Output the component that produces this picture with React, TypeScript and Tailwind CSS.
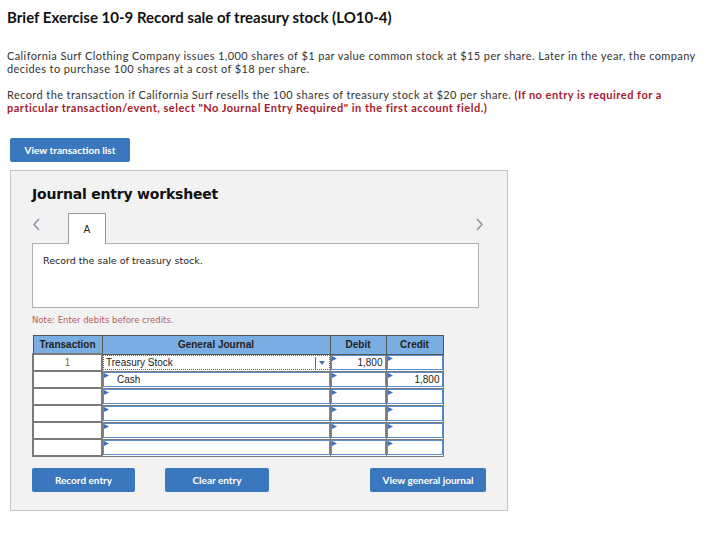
import React from "react";

const rows = [
  { tx: "1", account: "Treasury Stock", indent: false, debit: "1,800", credit: "", focused: true },
  { tx: "", account: "Cash", indent: true, debit: "", credit: "1,800", focused: false },
  { tx: "", account: "", indent: false, debit: "", credit: "", focused: false },
  { tx: "", account: "", indent: false, debit: "", credit: "", focused: false },
  { tx: "", account: "", indent: false, debit: "", credit: "", focused: false },
  { tx: "", account: "", indent: false, debit: "", credit: "", focused: false },
];

export default function App() {
  return (
    <div className="min-h-[540px] bg-white px-[7px] pt-[9px] text-[#222] font-['Lato','Liberation_Sans',sans-serif]">
      <h2 className="text-[15px] font-bold leading-[16px] text-[#111]">
        Brief Exercise 10-9 Record sale of treasury stock (LO10-4)
      </h2>

      <p className="mt-[24px] text-[11px] leading-[13px] tracking-[0.4px] text-[#333]">
        California Surf Clothing Company issues 1,000 shares of $1 par value common stock at $15 per share. Later in the year, the company decides to purchase 100 shares at a cost of $18 per share.
      </p>
      <p className="mt-[13px] text-[11px] leading-[13px] tracking-[0.4px] text-[#333]">
        Record the transaction if California Surf resells the 100 shares of treasury stock at $20 per share.{" "}
        <span className="font-bold tracking-[0.5px] text-[#a6192e]">
          (If no entry is required for a particular transaction/event, select "No Journal Entry Required" in the first account field.)
        </span>
      </p>

      <button className="mt-[24px] ml-[3px] h-[24px] w-[120px] rounded-[2px] bg-[#3b77bc] text-[10px] font-bold text-white">
        View transaction list
      </button>

      <Worksheet />
    </div>
  );
}

function Worksheet() {
  return (
    <section className="mt-[8px] ml-[3px] w-[498px] border border-[#c4c4c4] bg-[#f2f2f2] pl-[21px] pt-[14px] pb-[18px] font-['DejaVu_Sans','Verdana',sans-serif]">
      <h3 className="text-[14px] font-bold leading-[18px] tracking-[-0.2px] text-[#111]">Journal entry worksheet</h3>

      <div className="mt-[10px] flex h-[30px] w-[452px] items-start">
        <Chevron dir="left" />
        <div className="relative z-10 ml-[27px] flex h-[31px] w-[38px] items-center justify-center border border-b-0 border-[#999] bg-white text-[10px] text-[#222]">
          A
        </div>
        <div className="flex-1" />
        <Chevron dir="right" />
      </div>

      <div className="h-[65px] w-[447px] border border-[#b0b0b0] bg-white px-[10px] pt-[10px] text-[9.5px] text-[#222]">
        Record the sale of treasury stock.
      </div>

      <p className="mt-[6px] text-[8.5px] text-[#b5605a]">Note: Enter debits before credits.</p>

      <JournalTable />

      <div className="mt-[11px] flex font-['Lato','Liberation_Sans',sans-serif]">
        <BlueButton className="w-[103px]">Record entry</BlueButton>
        <BlueButton className="ml-[30px] w-[104px]">Clear entry</BlueButton>
        <BlueButton className="ml-[101px] w-[116px]">View general journal</BlueButton>
      </div>
    </section>
  );
}

function JournalTable() {
  return (
    <table className="mt-[8px] w-[410px] table-fixed border-collapse font-['Liberation_Sans','Arial',sans-serif] text-[10px]">
      <colgroup>
        <col className="w-[69px]" />
        <col className="w-[228px]" />
        <col className="w-[56px]" />
        <col className="w-[57px]" />
      </colgroup>
      <thead>
        <tr className="h-[19px] bg-[#7aade2] text-[#222]">
          <th className="border border-[#555] font-bold">Transaction</th>
          <th className="border border-[#555] font-bold">General Journal</th>
          <th className="border border-[#555] font-bold">Debit</th>
          <th className="border border-[#555] font-bold">Credit</th>
        </tr>
      </thead>
      <tbody>
        {rows.map((r, i) => (
          <tr key={i} className="h-[17px]">
            <td className="border-2 border-[#7a7a7a] bg-white text-center text-[#a0662a]">{r.tx}</td>
            <td className="border border-[#7a7a7a] bg-white p-0">
              {r.focused ? (
                <div className="relative flex h-[15px] items-center border border-dotted border-[#3a6fb5] pl-[2px] text-[#222]">
                  {r.account}
                  <span className="absolute right-[13px] top-[1px] h-[12px] w-px bg-[#3a6fb5]" />
                  <svg className="absolute right-[4px] top-[5px]" width="6" height="4" viewBox="0 0 6 4">
                    <polygon points="0,0 6,0 3,4" fill="#4a6fa0" />
                  </svg>
                </div>
              ) : (
                <Cell text={r.account} indent={r.indent} />
              )}
            </td>
            <td className="border border-[#7a7a7a] bg-white p-0">
              <Cell text={r.debit} right />
            </td>
            <td className="border border-[#7a7a7a] bg-white p-0">
              <Cell text={r.credit} right />
            </td>
          </tr>
        ))}
      </tbody>
    </table>
  );
}

function Cell({ text, indent, right }: { text: string; indent?: boolean; right?: boolean }) {
  return (
    <div
      className={
        "relative flex h-[15px] items-center border border-[#5b8ccc] text-[#222] " +
        (right ? "justify-end pr-[2px]" : indent ? "pl-[13px]" : "pl-[2px]")
      }
    >
      <svg className="absolute left-0 top-0" width="5" height="5" viewBox="0 0 5 5">
        <polygon points="0,0 5,2.5 0,5" fill="#3d72c0" />
      </svg>
      {text}
    </div>
  );
}

function BlueButton({ children, className }: { children: React.ReactNode; className?: string }) {
  return (
    <button className={"h-[24px] rounded-[2px] bg-[#3b77bc] text-[10px] font-bold text-white " + (className ?? "")}>
      {children}
    </button>
  );
}

function Chevron({ dir }: { dir: "left" | "right" }) {
  return (
    <svg className="mt-[5px]" width="9" height="13" viewBox="0 0 9 13">
      <polyline
        points={dir === "left" ? "7,1 2,6.5 7,12" : "2,1 7,6.5 2,12"}
        fill="none"
        stroke="#8a96aa"
        strokeWidth="1.6"
      />
    </svg>
  );
}
